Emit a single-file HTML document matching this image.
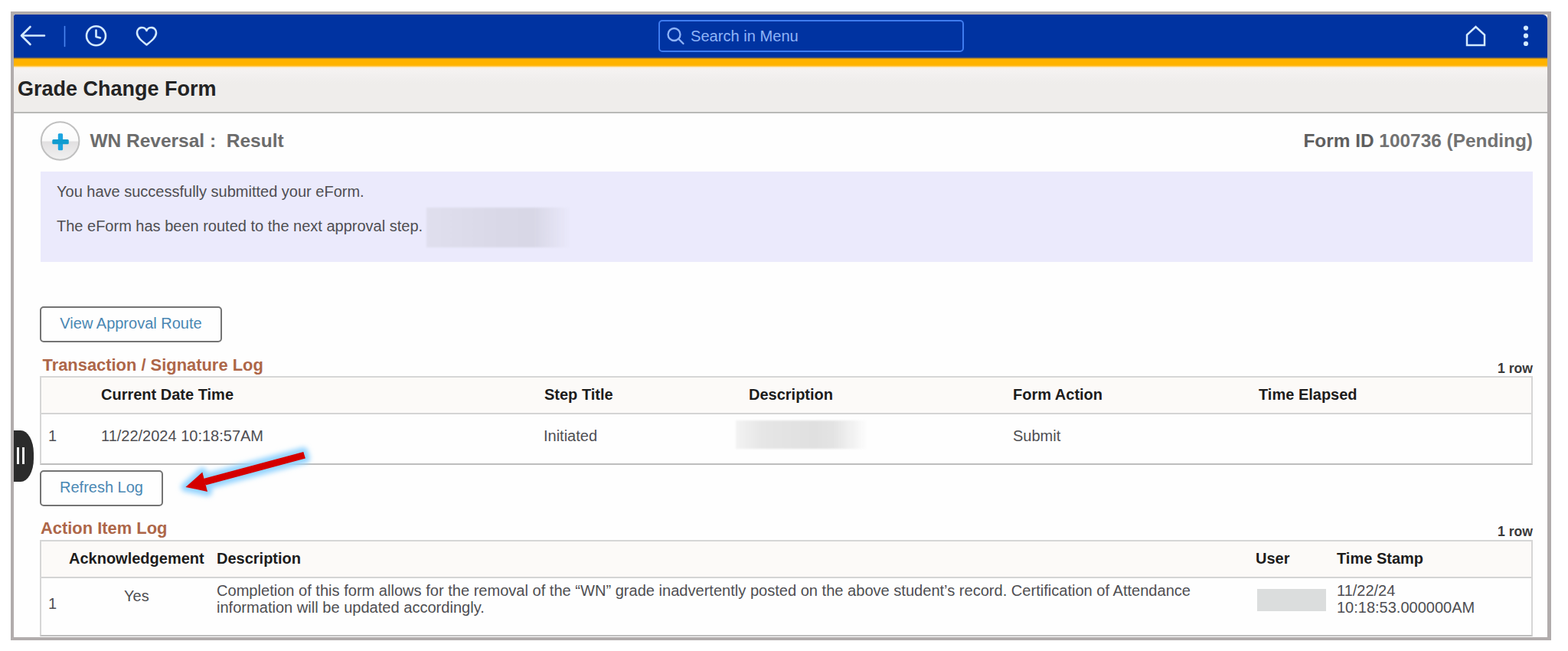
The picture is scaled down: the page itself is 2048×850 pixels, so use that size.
<!DOCTYPE html>
<html lang="en">
<head>
<meta charset="utf-8">
<title>Grade Change Form</title>
<style>
*{box-sizing:border-box;margin:0;padding:0}
html,body{width:2048px;height:850px;overflow:hidden;background:#fff}
body{font-family:"Liberation Sans",Arial,sans-serif;color:#4e4e52;position:relative;font-size:20px}
.a{position:absolute;white-space:pre;line-height:1}
.b{font-weight:bold}
#frame{position:absolute;left:14px;top:15px;width:2012px;height:821px;background:#b1acac}
#inner{position:absolute;left:18px;top:19px;width:2003px;height:813px;background:#fefefe}
#hdr{position:absolute;left:18px;top:19px;width:2003px;height:56px;background:#0033a1;border-radius:2px 6px 0 0}
#gold{position:absolute;left:18px;top:74px;width:2003px;height:15px;background:linear-gradient(to bottom,#0033a1 0,#2a3f86 1px,#8f7a3c 2px,#f5ad08 3px,#ffb300 4px,#ffb300 11px,#ffc64a 12.500px,#fbe6b8 13.500px,#f6f3f1 15px)}
#title{position:absolute;left:18px;top:89px;width:2003px;height:58.500px;background:linear-gradient(to bottom,#f6f3f2 0,#f1efee 12px,#efedeb 20px,#efedeb 100%);border-bottom:2px solid #b9b9b7}
#search{position:absolute;left:860px;top:26px;width:399px;height:42px;border:2px solid #3f7cef;border-radius:5px}
.msg{position:absolute;left:52.500px;top:224px;width:1949.500px;height:117.500px;background:#ebeafc}
.btn{position:absolute;height:47px;border:2px solid #737373;border-radius:5px;background:#fefefe;color:#4a87b3;font-size:20px;line-height:41px;text-align:center;white-space:nowrap}
.sec{color:#ad6648;font-size:21.900px;font-weight:bold}
.tbl{position:absolute;left:52px;width:1950px;border:2px solid #d6d6d6;border-bottom:2px solid #bebebe;background:#fefefe}
.th{position:absolute;left:0;top:0;width:100%;background:#fcfaf8;border-bottom:2px solid #d4d4d4}
.h{color:#1c1c1c;font-weight:bold}
.rows{font-size:17.600px;font-weight:bold;color:#3a3a3a}
.blur{position:absolute;filter:blur(5px)}
</style>
</head>
<body>
<div id="frame"></div>
<div id="inner"></div>
<div id="hdr"></div>
<div id="gold"></div>
<div id="title"></div>

<!-- header icons -->
<svg class="a" style="left:18px;top:19px" width="2003" height="56" viewBox="18 19 2003 56" fill="none" stroke="#d3eaff" stroke-width="2.600" stroke-linecap="round" stroke-linejoin="round">
  <path d="M58 46.500H28M39.500 35L28 46.500L39.500 58"/>
  <path d="M84.500 34.500v26" stroke="#4a86f0" stroke-width="1.600"/>
  <circle cx="125.500" cy="46.800" r="12.500"/>
  <path d="M125.500 39.500v8.500l5.500 1.500"/>
  <path d="M191.500 58.500c-7-5.500-12.500-10-12.500-15.500a6.500 6.500 0 0 1 12.500-3a6.500 6.500 0 0 1 12.500 3c0 5.500-5.500 10-12.500 15.500z"/>
  <circle cx="880.500" cy="45" r="8" stroke="#8fb4f7" stroke-width="2.300"/>
  <path d="M886.500 51l6 6" stroke="#8fb4f7" stroke-width="2.300"/>
  <path d="M1916 59V45.500l11.500-10.500l11.500 10.500V59z" stroke-linejoin="miter" stroke-width="2.500"/>
  <g fill="#d3eaff" stroke="none"><circle cx="1993" cy="36.600" r="3.100"/><circle cx="1993" cy="46.700" r="3.100"/><circle cx="1993" cy="57" r="3.100"/></g>
</svg>
<div id="search"></div>
<div class="a" style="left:902px;top:36px;font-size:20.100px;color:#8fb4f7;line-height:23px">Search in Menu</div>

<h1 class="a b" style="left:23px;top:101px;font-size:27px;color:#232323;line-height:31px">Grade Change Form</h1>

<!-- plus icon -->
<svg class="a" style="left:52px;top:156.600px" width="54" height="54" viewBox="0 0 54 54">
  <defs><linearGradient id="g1" x1="0" y1="0" x2="0" y2="1"><stop offset="0" stop-color="#ffffff"/><stop offset="0.490" stop-color="#fafafa"/><stop offset="0.530" stop-color="#e2e0e1"/><stop offset="1" stop-color="#f1f1f1"/></linearGradient></defs>
  <circle cx="26.600" cy="27" r="24.800" fill="url(#g1)" stroke="#c0c0c0" stroke-width="2"/>
  <rect x="23.800" y="17.200" width="6.300" height="22" rx="1.500" fill="#1ba4e0"/>
  <rect x="16.300" y="25" width="21.500" height="6.300" rx="1.500" fill="#109ccf"/>
</svg>
<div class="a b" style="left:117.400px;top:169.800px;font-size:24.500px;color:#6c6c6c;line-height:28px">WN Reversal :  Result</div>
<div class="a b" style="right:46px;top:170px;font-size:24.400px;color:#727272;line-height:28px"><span style="color:#5e5e5e">Form ID</span> 100736 (Pending)</div>

<div class="msg"></div>
<div class="a" style="left:74px;top:238.500px;line-height:23px">You have successfully submitted your eForm.</div>
<div class="a" style="left:74px;top:283.500px;line-height:23px">The eForm has been routed to the next approval step.</div>
<div class="a" style="left:556.500px;top:271px;width:188px;height:52px;filter:blur(0.800px);background:linear-gradient(to right,#e0dfee 0,#dad9e8 45%,#d8d7e6 75%,rgba(226,225,243,0) 100%)"></div>

<div class="btn" style="left:52px;top:400px;width:238px">View Approval Route</div>

<div class="a sec" style="left:55.500px;top:464px;line-height:25px">Transaction / Signature Log</div>
<div class="a rows" style="right:46px;top:471px;line-height:20px">1 row</div>
<div class="tbl" style="top:490.500px;height:116px">
  <div class="th" style="height:48.500px"></div>
</div>
<div class="a h" style="left:132px;top:504px;line-height:23px">Current Date Time</div>
<div class="a h" style="left:711px;top:504px;line-height:23px">Step Title</div>
<div class="a h" style="left:978px;top:504px;line-height:23px">Description</div>
<div class="a h" style="left:1323px;top:504px;line-height:23px">Form Action</div>
<div class="a h" style="left:1644px;top:504px;line-height:23px">Time Elapsed</div>
<div class="a" style="left:63px;top:557.500px;line-height:23px">1</div>
<div class="a" style="left:132px;top:557.500px;line-height:23px">11/22/2024 10:18:57AM</div>
<div class="a" style="left:710px;top:557.500px;line-height:23px">Initiated</div>
<div class="a" style="left:960.500px;top:549px;width:172px;height:37px;filter:blur(0.800px);background:linear-gradient(to right,#f3f3f3 0,#e6e6e6 20%,#e0e0e0 60%,#e4e4e4 75%,rgba(240,240,240,0) 100%)"></div>
<div class="a" style="left:1323px;top:557.500px;line-height:23px">Submit</div>

<!-- side tab -->
<div class="a" style="left:18px;top:562px;width:26.200px;height:66.500px;background:#2b2b2b;border-radius:0 17px 17px 0/0 30px 30px 0"></div>
<div class="a" style="left:22.200px;top:584px;width:3.200px;height:22px;background:#f4f4f4"></div>
<div class="a" style="left:29.100px;top:584px;width:3.200px;height:22px;background:#f4f4f4"></div>

<div class="btn" style="left:52px;top:614px;width:161px">Refresh Log</div>

<!-- arrow -->
<svg class="a" style="left:220px;top:570px" width="200" height="90" viewBox="220 570 200 90">
  <defs><filter id="glow" x="-30%" y="-60%" width="160%" height="220%"><feGaussianBlur stdDeviation="3"/></filter></defs>
  <g filter="url(#glow)" fill="#8fd2ff" stroke="#94d4ff" stroke-width="12" stroke-linejoin="round"><path d="M396.300 590.100l2.600 8.500L268.700 633.500l-3-8.400z"/><path d="M242.400 635.900l21.900-19.300l6.700 25.400z"/></g>
  <path d="M396.300 590.100l2.600 8.500L268.700 633.500l-3-8.400z" fill="#d40000"/>
  <path d="M242.400 635.900l21.900-19.300l6.700 25.400z" fill="#d40000"/>
</svg>

<div class="a sec" style="left:53px;top:676.500px;line-height:25px">Action Item Log</div>
<div class="a rows" style="right:46px;top:684px;line-height:20px">1 row</div>
<div class="tbl" style="top:705px;height:125.500px">
  <div class="th" style="height:47.500px"></div>
</div>
<div class="a h" style="left:90px;top:718px;line-height:23px">Acknowledgement</div>
<div class="a h" style="left:283px;top:718px;line-height:23px">Description</div>
<div class="a h" style="left:1640px;top:718px;line-height:23px">User</div>
<div class="a h" style="left:1746px;top:718px;line-height:23px">Time Stamp</div>
<div class="a" style="left:63px;top:777px;line-height:23px">1</div>
<div class="a" style="left:162px;top:767px;line-height:23px">Yes</div>
<div class="a" style="left:283px;top:760px;line-height:22px;font-size:20.070px">Completion of this form allows for the removal of the “WN” grade inadvertently posted on the above student’s record. Certification of Attendance</div>
<div class="a" style="left:283px;top:782px;line-height:22px;font-size:20.070px">information will be updated accordingly.</div>
<div class="a" style="left:1642px;top:769px;width:90px;height:28.500px;background:#dbdddd"></div>
<div class="a" style="left:1746px;top:760px;line-height:22px">11/22/24</div>
<div class="a" style="left:1746px;top:782px;line-height:22px">10:18:53.000000AM</div>
</body>
</html>
